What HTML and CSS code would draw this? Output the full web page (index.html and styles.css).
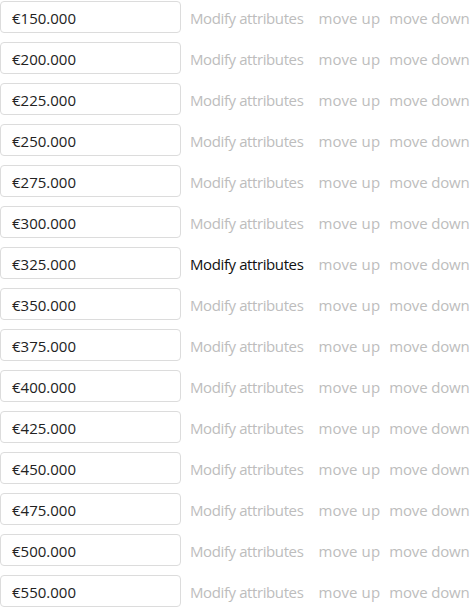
FILE: index.html
```html
<!DOCTYPE html>
<html>
<head>
<meta charset="utf-8">
<link rel="stylesheet" href="styles.css">
</head>
<body>
<ul class="list">
  <li class="row"><div class="field">€150.000</div><a class="link modify">Modify attributes</a><a class="link up">move up</a><a class="link down">move down</a></li>
  <li class="row"><div class="field">€200.000</div><a class="link modify">Modify attributes</a><a class="link up">move up</a><a class="link down">move down</a></li>
  <li class="row"><div class="field">€225.000</div><a class="link modify">Modify attributes</a><a class="link up">move up</a><a class="link down">move down</a></li>
  <li class="row"><div class="field">€250.000</div><a class="link modify">Modify attributes</a><a class="link up">move up</a><a class="link down">move down</a></li>
  <li class="row"><div class="field">€275.000</div><a class="link modify">Modify attributes</a><a class="link up">move up</a><a class="link down">move down</a></li>
  <li class="row"><div class="field">€300.000</div><a class="link modify">Modify attributes</a><a class="link up">move up</a><a class="link down">move down</a></li>
  <li class="row"><div class="field">€325.000</div><a class="link modify active">Modify attributes</a><a class="link up">move up</a><a class="link down">move down</a></li>
  <li class="row"><div class="field">€350.000</div><a class="link modify">Modify attributes</a><a class="link up">move up</a><a class="link down">move down</a></li>
  <li class="row"><div class="field">€375.000</div><a class="link modify">Modify attributes</a><a class="link up">move up</a><a class="link down">move down</a></li>
  <li class="row"><div class="field">€400.000</div><a class="link modify">Modify attributes</a><a class="link up">move up</a><a class="link down">move down</a></li>
  <li class="row"><div class="field">€425.000</div><a class="link modify">Modify attributes</a><a class="link up">move up</a><a class="link down">move down</a></li>
  <li class="row"><div class="field">€450.000</div><a class="link modify">Modify attributes</a><a class="link up">move up</a><a class="link down">move down</a></li>
  <li class="row"><div class="field">€475.000</div><a class="link modify">Modify attributes</a><a class="link up">move up</a><a class="link down">move down</a></li>
  <li class="row"><div class="field">€500.000</div><a class="link modify">Modify attributes</a><a class="link up">move up</a><a class="link down">move down</a></li>
  <li class="row"><div class="field">€550.000</div><a class="link modify">Modify attributes</a><a class="link up">move up</a><a class="link down">move down</a></li>
</ul>
</body>
</html>
```
FILE: styles.css
```css
html, body {
  margin: 0;
  padding: 0;
  background: #ffffff;
}
body {
  font-family: "Open Sans", "Liberation Sans", sans-serif;
  font-size: 15px;
  overflow: hidden;
}
.list {
  list-style: none;
  margin: 0;
  padding: 1px 0 0 0;
  display: flex;
  flex-direction: column;
  gap: 9px;
}
.row {
  display: flex;
  align-items: center;
  height: 32px;
}
.field {
  box-sizing: border-box;
  flex: none;
  width: 181px;
  height: 32px;
  border: 1px solid #dcdcdc;
  border-radius: 4px;
  padding: 1px 0 0 11px;
  display: flex;
  align-items: center;
  color: #222222;
  margin-right: 9px;
}
.link {
  color: #bdbdbd;
  white-space: nowrap;
  cursor: pointer;
  padding-top: 2px;
}
.link.modify {
  letter-spacing: -0.4px;
  margin-right: 15px;
}
.link.up {
  letter-spacing: 0.1px;
  margin-right: 9px;
}
.link.down {
  letter-spacing: -0.15px;
}
.link.active {
  color: #111111;
}
```
